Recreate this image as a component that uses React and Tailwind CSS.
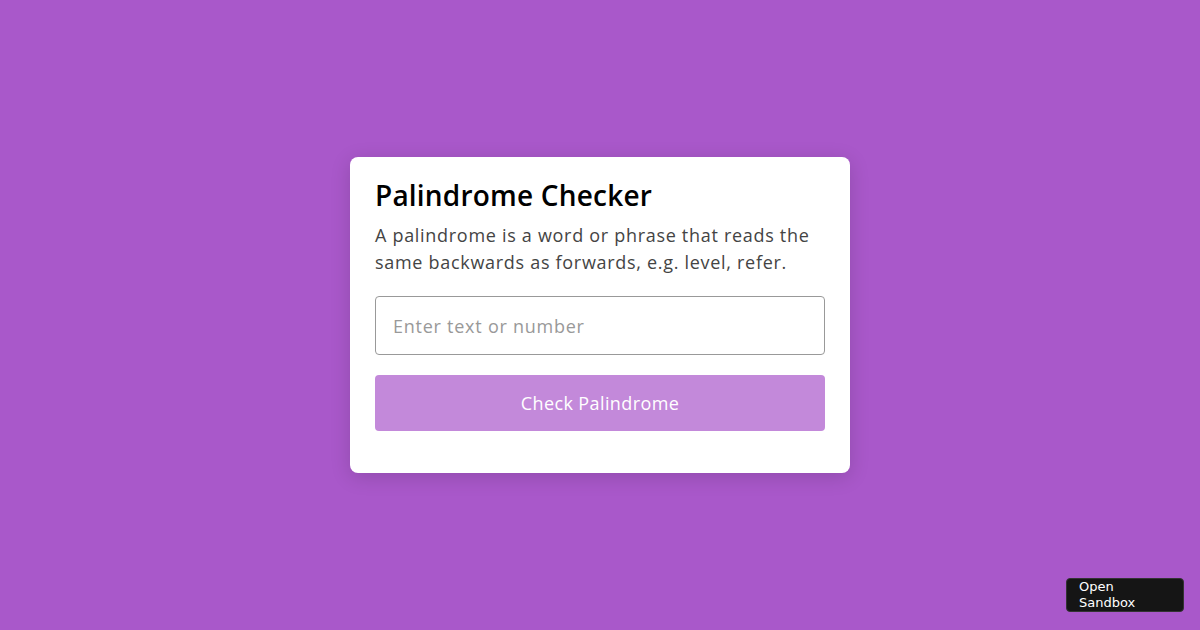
export default function App() {
    return (
        <div className="relative flex h-[630px] w-full items-center justify-center bg-[#a958ca] font-['Open_Sans',sans-serif]">
            {/* Card */}
            <div className="w-[500px] rounded-lg bg-white px-[25px] pt-[19px] pb-[42px] shadow-[0_4px_20px_rgba(0,0,0,0.15)]">
                <h1 className="text-[28px] leading-[38px] font-semibold tracking-[0.2px] text-black">Palindrome Checker</h1>
                <p className="mt-[8px] text-[18px] leading-[27px] tracking-[0.7px] text-[#444]">
                    A palindrome is a word or phrase that reads the same backwards as forwards, e.g. level, refer.
                </p>
                <input
                    type="text"
                    placeholder="Enter text or number"
                    className="mt-[20px] h-[59px] w-full rounded-[4px] border border-[#999] px-[17px] text-[18px] tracking-[0.75px] text-[#333] outline-none placeholder:text-[#999]"
                />
                <button className="mt-[20px] h-[56px] w-full rounded-[4px] bg-[#c389da] text-[18px] tracking-[0.4px] text-white">
                    Check Palindrome
                </button>
            </div>

            {/* Sandbox badge */}
            <div className="absolute right-[16px] bottom-[18px] w-[118px] rounded-[4px] border border-[#333] bg-[#151515] px-[12px] font-['DejaVu_Sans',sans-serif] text-[13px] leading-[16px] text-white">
                Open Sandbox
            </div>
        </div>
    );
}
